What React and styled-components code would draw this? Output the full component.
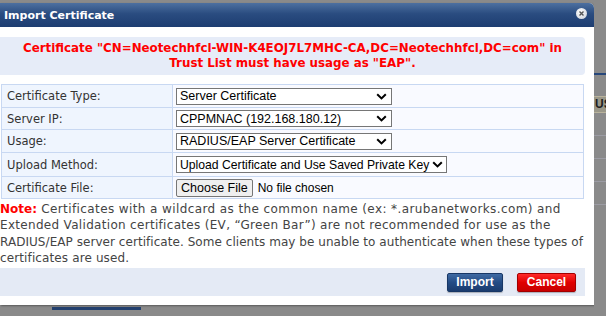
import React from "react";
import styled, { createGlobalStyle } from "styled-components";

const GlobalStyle = createGlobalStyle`
  html, body {
    margin: 0;
    padding: 0;
    background: #8a8a8a;
    overflow: hidden;
  }
`;

const Screen = styled.div`
  display: flex;
  width: 606px;
  height: 316px;
  background: #8a8a8a;
  overflow: hidden;
`;

const LeftSide = styled.div`
  display: flex;
  flex-direction: column;
  flex: none;
  width: 594px;
`;

const Dialog = styled.div`
  margin-top: 3px;
  height: 302px;
  background: #fff;
  border-top-right-radius: 5px;
  box-shadow: 1px 1px 2px rgba(0, 0, 0, 0.35);
  display: flex;
  flex-direction: column;
`;

const TitleBar = styled.div`
  height: 24px;
  flex: none;
  display: flex;
  align-items: center;
  justify-content: space-between;
  padding: 0 7px 0 4px;
  background: linear-gradient(#4d70a0, #2a4c80 45%, #1d3d71);
  border-top-right-radius: 5px;
`;

const Title = styled.div`
  font-family: "DejaVu Sans", Verdana, sans-serif;
  font-weight: bold;
  font-size: 11px;
  color: #fff;
`;

const Close = styled.div`
  width: 11px;
  height: 11px;
  border-radius: 50%;
  background: radial-gradient(circle at 40% 35%, #ffffff, #c9ced6);
  display: flex;
  align-items: center;
  justify-content: center;
  margin-top: -3px;
`;

const Body = styled.div`
  padding: 10px 9px 0 0;
  display: flex;
  flex-direction: column;
  flex: 1;
`;

const Alert = styled.div`
  background: #e6ecf8;
  border-radius: 0 4px 4px 0;
  padding: 4px 0 5px;
  text-align: center;
  color: #ff0000;
  font-family: "DejaVu Sans", Verdana, sans-serif;
  font-weight: bold;
  font-size: 11.85px;
  line-height: 14.5px;
  white-space: nowrap;
`;

const FormTable = styled.table`
  margin: 9px 1px 0 1px;
  border-collapse: collapse;
  width: 583px;
`;

const LabelCell = styled.td`
  width: 160px;
  height: ${(p) => p.h}px;
  padding: 0 5px;
  background: #eff5fe;
  border: 1px solid #c8d8f2;
  font-family: "DejaVu Sans", Verdana, sans-serif;
  font-size: 11.5px;
  color: #333;
`;

const FieldCell = styled.td`
  padding: 0 3px;
  background: #f9faff;
  border: 1px solid #c8d8f2;
  font-family: "Liberation Sans", Arial, sans-serif;
  font-size: 12.5px;
  color: #000;
`;

const SelectBox = styled.div`
  display: inline-flex;
  align-items: center;
  justify-content: space-between;
  gap: 3px;
  box-sizing: border-box;
  width: ${(p) => p.w}px;
  height: 17px;
  padding: 0 4px 0 3px;
  border: 1px solid #767676;
  background: #fff;
  vertical-align: middle;
  white-space: nowrap;
  font-size: ${(p) => (p.small ? "12.2px" : "12.5px")};

  svg {
    flex: none;
  }
`;

const FileRow = styled.div`
  display: flex;
  align-items: center;
  gap: 5px;
`;

const FileButton = styled.div`
  box-sizing: border-box;
  height: 18px;
  padding: 0 4px;
  display: flex;
  align-items: center;
  background: #efefef;
  border: 1px solid #767676;
  border-radius: 2px;
`;

const FileName = styled.span`
  font-size: 12px;
`;

const Note = styled.div`
  font-family: "DejaVu Sans", Verdana, sans-serif;
  font-size: 12px;
  line-height: 16.3px;
  color: #444;
  white-space: nowrap;
  padding-top: 2px;
`;

const NoteLine = styled.div`
  letter-spacing: ${(p) => p.spread}px;
`;

const NoteLabel = styled.span`
  color: #ff0000;
  font-weight: bold;
  letter-spacing: 0;
`;

const Footer = styled.div`
  margin-top: 2px;
  height: 28px;
  background: #e4eaf5;
  display: flex;
  justify-content: flex-end;
  align-items: center;
  gap: 14px;
  padding-right: 9px;
`;

const Button = styled.div`
  box-sizing: border-box;
  height: 19px;
  width: ${(p) => p.w}px;
  display: flex;
  align-items: center;
  justify-content: center;
  border-radius: 2px;
  font-family: "Liberation Sans", Arial, sans-serif;
  font-weight: bold;
  font-size: 12px;
  color: #fff;
  border: 1px solid ${(p) => (p.danger ? "#a30000" : "#183766")};
  background: ${(p) =>
    p.danger
      ? "linear-gradient(#ff2a2a, #e00000 50%, #c80000)"
      : "linear-gradient(#3f6aa3, #244c85 50%, #1b3c6e)"};
  box-shadow: 0 1px 1px rgba(0, 0, 0, 0.25);
`;

const BottomStrip = styled.div`
  flex: 1;
  padding: 2px 0 0 52px;
`;

const BackTab = styled.div`
  width: 89px;
  height: 3px;
  background: #23406e;
`;

const BackPage = styled.div`
  flex: 1;
  display: flex;
  flex-direction: column;
  padding-top: 73px;
  background: #8a8a8a;
`;

const BackRule = styled.div`
  height: 2px;
  background: #26467a;
  margin-bottom: 21px;
`;

const BackHeader = styled.div`
  height: 15px;
  border-top: 1px solid #b9b39c;
  border-bottom: 1px solid #b9b39c;
  background: #9a9788;
  font-family: "Liberation Sans", Arial, sans-serif;
  font-weight: bold;
  font-size: 12px;
  line-height: 15px;
  color: #1e1e1e;
  padding-left: 1px;
  overflow: hidden;
`;

const BackRow = styled.div`
  height: 22px;
  border-bottom: 1px solid #9c9ca4;
`;

const Chevron = () => (
  <svg width="11" height="7" viewBox="0 0 11 7">
    <path d="M1.2 1.2 L5.5 5.4 L9.8 1.2" fill="none" stroke="#000" strokeWidth="2" />
  </svg>
);

const Select = ({ w, small, children }) => (
  <SelectBox w={w} small={small}>
    <span>{children}</span>
    <Chevron />
  </SelectBox>
);

const rows = [
  { label: "Certificate Type:", h: 22, value: "Server Certificate", w: 216 },
  { label: "Server IP:", h: 21, value: "CPPMNAC (192.168.180.12)", w: 216 },
  { label: "Usage:", h: 22, value: "RADIUS/EAP Server Certificate", w: 216 },
  { label: "Upload Method:", h: 23, value: "Upload Certificate and Use Saved Private Key", w: 271, small: true },
];

export default function App() {
  return (
    <>
      <GlobalStyle />
      <Screen>
        <LeftSide>
          <Dialog>
            <TitleBar>
              <Title>Import Certificate</Title>
              <Close>
                <svg width="7" height="7" viewBox="0 0 7 7">
                  <path d="M1.5 1.5 L5.5 5.5 M5.5 1.5 L1.5 5.5" stroke="#555" strokeWidth="1.4" />
                </svg>
              </Close>
            </TitleBar>
            <Body>
              <Alert>
                Certificate "CN=Neotechhfcl-WIN-K4EOJ7L7MHC-CA,DC=Neotechhfcl,DC=com" in
                <br />
                Trust List must have usage as "EAP".
              </Alert>
              <FormTable>
                <tbody>
                  {rows.map((r) => (
                    <tr key={r.label}>
                      <LabelCell h={r.h}>{r.label}</LabelCell>
                      <FieldCell>
                        <Select w={r.w} small={r.small}>
                          {r.value}
                        </Select>
                      </FieldCell>
                    </tr>
                  ))}
                  <tr>
                    <LabelCell h={21}>Certificate File:</LabelCell>
                    <FieldCell>
                      <FileRow>
                        <FileButton>Choose File</FileButton>
                        <FileName>No file chosen</FileName>
                      </FileRow>
                    </FieldCell>
                  </tr>
                </tbody>
              </FormTable>
              <Note>
                <NoteLine spread={0.4}>
                  <NoteLabel>Note:</NoteLabel> Certificates with a wildcard as the common name (ex: *.arubanetworks.com) and
                </NoteLine>
                <NoteLine spread={0.31}>
                  Extended Validation certificates (EV, “Green Bar”) are not recommended for use as the
                </NoteLine>
                <NoteLine spread={0.05}>
                  RADIUS/EAP server certificate. Some clients may be unable to authenticate when these types of
                </NoteLine>
                <NoteLine spread={0.12}>certificates are used.</NoteLine>
              </Note>
              <Footer>
                <Button w={56}>Import</Button>
                <Button w={59} danger>
                  Cancel
                </Button>
              </Footer>
            </Body>
          </Dialog>
          <BottomStrip>
            <BackTab />
          </BottomStrip>
        </LeftSide>
        <BackPage>
          <BackRule />
          <BackHeader>US</BackHeader>
          <BackRow />
          <BackRow />
          <BackRow />
          <BackRow />
        </BackPage>
      </Screen>
    </>
  );
}
